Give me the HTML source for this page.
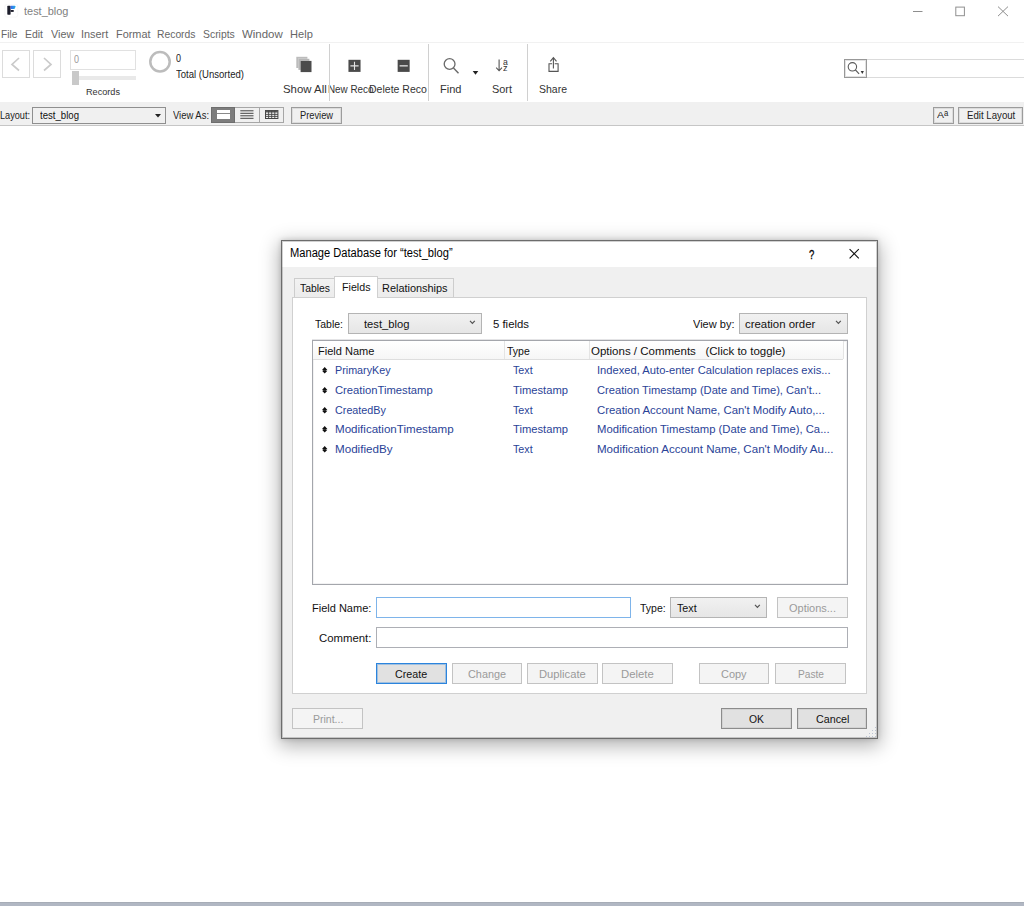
<!DOCTYPE html>
<html><head><meta charset="utf-8"><title>test_blog</title>
<style>
html,body{margin:0;padding:0;}
body{width:1024px;height:906px;position:relative;overflow:hidden;background:#fff;font-family:"Liberation Sans",sans-serif;}
div,span,svg{position:absolute;box-sizing:border-box;}
.t{white-space:pre;transform-origin:0 0;display:block;}
</style></head><body>
<span class="t" style="left:24.00px;top:6px;font-size:11.2px;line-height:11.2px;color:#808080;transform:scaleX(0.9790);">test_blog</span>
<svg style="left:4px;top:4px" width="15" height="14" viewBox="0 0 15 14"><defs><linearGradient id="ig" x1="0" x2="1"><stop offset="0" stop-color="#3b63ee"/><stop offset="1" stop-color="#22b4e4"/></linearGradient></defs><rect x="0.8" y="0.3" width="13" height="12.8" rx="2.2" fill="#fff" stroke="#f3f3f3" stroke-width="0.6"/><rect x="3.3" y="1.8" width="3.3" height="8.9" rx="0.6" fill="#1c1d2b"/><path d="M6.6 1.8h4.2a0.9 0.9 0 0 1 0.7 1.3l-0.9 1.6a0.8 0.8 0 0 1-0.7 0.4H6.6z" fill="url(#ig)"/><rect x="6.6" y="6" width="3.1" height="1.9" fill="#1c1d2b"/></svg>
<svg style="left:905px;top:0" width="119" height="24" viewBox="0 0 119 24"><path d="M8 11.5h9.5" stroke="#8e8e8e" stroke-width="1" fill="none"/><rect x="50.8" y="7.1" width="8.6" height="8.6" stroke="#909090" stroke-width="1" fill="none"/><path d="M93 6.6l10 9.5M103 6.6l-10 9.5" stroke="#8e8e8e" stroke-width="1" fill="none"/></svg>
<span class="t" style="left:1.00px;top:29px;font-size:10.6px;line-height:10.6px;color:#666;transform:scaleX(0.9543);">File</span>
<span class="t" style="left:25.20px;top:29px;font-size:10.6px;line-height:10.6px;color:#666;transform:scaleX(0.9855);">Edit</span>
<span class="t" style="left:50.50px;top:29px;font-size:10.6px;line-height:10.6px;color:#666;transform:scaleX(1.0183);">View</span>
<span class="t" style="left:81.00px;top:29px;font-size:10.6px;line-height:10.6px;color:#666;transform:scaleX(1.0260);">Insert</span>
<span class="t" style="left:115.50px;top:29px;font-size:10.6px;line-height:10.6px;color:#666;transform:scaleX(1.0277);">Format</span>
<span class="t" style="left:157.40px;top:29px;font-size:10.6px;line-height:10.6px;color:#666;transform:scaleX(0.9754);">Records</span>
<span class="t" style="left:203.20px;top:29px;font-size:10.6px;line-height:10.6px;color:#666;transform:scaleX(0.9816);">Scripts</span>
<span class="t" style="left:242.40px;top:29px;font-size:10.6px;line-height:10.6px;color:#666;transform:scaleX(1.0822);">Window</span>
<span class="t" style="left:290.20px;top:29px;font-size:10.6px;line-height:10.6px;color:#666;transform:scaleX(1.0459);">Help</span>
<div style="left:0px;top:42px;width:1024px;height:1px;background:#f1f1f1;"></div>
<div style="left:2px;top:50px;width:28px;height:28px;background:#fff;border:1px solid #dcdcdc;"></div>
<div style="left:33px;top:50px;width:28px;height:28px;background:#fff;border:1px solid #dcdcdc;"></div>
<svg style="left:2px;top:50px" width="59" height="28" viewBox="0 0 59 28"><path d="M17 8l-7 6.5 7 6" stroke="#cacaca" stroke-width="1.7" fill="none"/><path d="M42 8l7 6.5-7 6" stroke="#cacaca" stroke-width="1.7" fill="none"/></svg>
<div style="left:70px;top:50px;width:66px;height:20px;background:#fff;border:1px solid #e1e1e1;"></div>
<span class="t" style="left:74.00px;top:55px;font-size:10px;line-height:10px;color:#9a9a9a;transform:scaleX(0.8990);">0</span>
<div style="left:79px;top:76px;width:57px;height:4px;background:#e9e9e9;"></div>
<div style="left:72px;top:71px;width:7px;height:14px;background:#c9c9c9;"></div>
<span class="t" style="left:86.00px;top:87px;font-size:9.6px;line-height:9.6px;color:#333;transform:scaleX(0.9511);">Records</span>
<svg style="left:147px;top:49px" width="26" height="26" viewBox="0 0 26 26"><circle cx="13" cy="12.8" r="9.7" stroke="#bcbcbc" stroke-width="2.5" fill="none"/></svg>
<span class="t" style="left:176.00px;top:54px;font-size:10px;line-height:10px;color:#222;transform:scaleX(0.8990);">0</span>
<span class="t" style="left:176.00px;top:70px;font-size:10px;line-height:10px;color:#222;transform:scaleX(0.9559);">Total (Unsorted)</span>
<span class="t" style="left:282.50px;top:84px;font-size:11.2px;line-height:11.2px;color:#333;transform:scaleX(1.0196);">Show All</span>
<span class="t" style="left:327.50px;top:84px;font-size:11.2px;line-height:11.2px;color:#333;transform:scaleX(0.8804);">New Reco</span>
<span class="t" style="left:369.30px;top:84px;font-size:11.2px;line-height:11.2px;color:#333;transform:scaleX(0.9402);">Delete Reco</span>
<span class="t" style="left:440.00px;top:84px;font-size:11.2px;line-height:11.2px;color:#333;transform:scaleX(0.9868);">Find</span>
<span class="t" style="left:492.00px;top:84px;font-size:11.2px;line-height:11.2px;color:#333;transform:scaleX(0.9737);">Sort</span>
<span class="t" style="left:539.00px;top:84px;font-size:11.2px;line-height:11.2px;color:#333;transform:scaleX(0.9369);">Share</span>
<div style="left:329px;top:44px;width:1px;height:57px;background:#d0d0d0;"></div>
<div style="left:428px;top:44px;width:1px;height:57px;background:#d0d0d0;"></div>
<div style="left:527px;top:44px;width:1px;height:57px;background:#d0d0d0;"></div>
<svg style="left:295px;top:56px" width="18" height="17" viewBox="0 0 18 17"><rect x="1.3" y="0.8" width="11.1" height="11.2" fill="#bcbcbc"/><rect x="3.1" y="2.5" width="11.5" height="11.6" fill="#fff" opacity="0.55"/><rect x="3.4" y="2.8" width="11" height="11.1" fill="#b6b6b6"/><rect x="5.3" y="4.6" width="11.4" height="11.7" fill="#fff" opacity="0.5"/><rect x="5.6" y="4.9" width="10.9" height="11.2" fill="#4c4c4c"/></svg>
<svg style="left:348px;top:59px" width="14" height="14" viewBox="0 0 14 14"><rect x="0.45" y="0.8" width="12.1" height="12.1" fill="#4a4a4a"/><path d="M6.5 2.8v8.1M2.4 6.85h8.2" stroke="#e4e4e4" stroke-width="1.1"/></svg>
<svg style="left:397px;top:59px" width="14" height="14" viewBox="0 0 14 14"><rect x="0.65" y="0.8" width="12" height="12.1" fill="#4a4a4a"/><path d="M2.6 6.85h8.2" stroke="#e4e4e4" stroke-width="1.3"/></svg>
<svg style="left:442px;top:57px" width="40" height="20" viewBox="0 0 40 20"><circle cx="7.6" cy="7" r="5.4" stroke="#6a6a6a" stroke-width="1.3" fill="none"/><path d="M11.5 10.9l5 5.4" stroke="#6a6a6a" stroke-width="1.4"/><path d="M30.7 13.9h5.6l-2.8 3.8z" fill="#222"/></svg>
<svg style="left:494px;top:58px" width="16" height="16" viewBox="0 0 16 16"><path d="M5.1 1.6v11M2.2 9.6l2.9 3.2 2.9-3.2" stroke="#555" stroke-width="1.1" fill="none"/></svg>
<span class="t" style="left:503.00px;top:57px;font-size:9.6px;line-height:9.6px;color:#333;transform:scaleX(0.8990);">a</span>
<span class="t" style="left:503.30px;top:63px;font-size:9.6px;line-height:9.6px;color:#333;transform:scaleX(0.9375);">z</span>
<svg style="left:546px;top:56px" width="16" height="18" viewBox="0 0 16 18"><path d="M6.1 7.8H3v7.6h9.1V7.8H8.7" stroke="#555" stroke-width="1.1" fill="none"/><path d="M7.4 2v10.4M4.3 5.4L7.4 1.7l3.1 3.7" stroke="#555" stroke-width="1.1" fill="none"/></svg>
<div style="left:866px;top:59px;width:159px;height:19px;background:#fff;border:1px solid #dbdbdb;"></div>
<div style="left:844px;top:59px;width:23px;height:19px;background:#fff;border:1px solid #989898;box-shadow:inset 0 0 0 1px #e2e2e2;"></div>
<svg style="left:846px;top:60px" width="20" height="17" viewBox="0 0 20 17"><circle cx="6.4" cy="6.8" r="4.2" stroke="#5a5a5a" stroke-width="1.1" fill="none"/><path d="M9.4 9.9l3.7 4" stroke="#5a5a5a" stroke-width="1.2"/><path d="M14.7 11.1h3.2l-1.6 2.8z" fill="#333"/></svg>
<div style="left:0px;top:102px;width:1024px;height:23px;background:#f0f0f0;"></div>
<div style="left:0px;top:125px;width:1024px;height:1px;background:#c6c6c6;"></div>
<span class="t" style="left:0.00px;top:111px;font-size:10px;line-height:10px;color:#222;transform:scaleX(0.9146);">Layout:</span>
<div style="left:32px;top:106.5px;width:134px;height:17px;background:#f0f0f0;border:1.5px solid #8f8f8f;"></div>
<span class="t" style="left:40.00px;top:111px;font-size:10px;line-height:10px;color:#111;transform:scaleX(0.9609);">test_blog</span>
<svg style="left:154px;top:113px" width="8" height="6" viewBox="0 0 8 6"><path d="M1 1h6l-3 3.6z" fill="#222"/></svg>
<span class="t" style="left:173.00px;top:111px;font-size:10px;line-height:10px;color:#222;transform:scaleX(0.9432);">View As:</span>
<div style="left:211px;top:107px;width:24px;height:16px;background:#7d7d7d;border:1px solid #6e6e6e;"></div>
<div style="left:217px;top:110px;width:13px;height:9px;background:#fff;border-top:1px solid #fff;"></div>
<div style="left:217px;top:113px;width:13px;height:1px;background:#8a8a8a;"></div>
<div style="left:235px;top:107px;width:24.5px;height:16px;background:#f0f0f0;border:1px solid #a6a6a6;border-left:none;"></div>
<svg style="left:240px;top:110px" width="14" height="10" viewBox="0 0 14 10"><path d="M0.3 0.8h13.2M0.3 3.3h13.2M0.3 5.8h13.2M0.3 8.3h13.2" stroke="#444" stroke-width="1"/></svg>
<div style="left:259.5px;top:107px;width:24.5px;height:16px;background:#f0f0f0;border:1px solid #a6a6a6;border-left:none;"></div>
<svg style="left:265px;top:110px" width="14" height="10" viewBox="0 0 14 10"><rect x="0.5" y="0.5" width="12.4" height="8" fill="none" stroke="#444"/><rect x="0.5" y="0.5" width="12.4" height="2" fill="#555"/><path d="M0 4.4h13M0 6.4h13M3.6 0.5v8M6.7 0.5v8M9.8 0.5v8" stroke="#444" stroke-width="0.9"/></svg>
<div style="left:291px;top:106.5px;width:51px;height:17px;background:#f0f0f0;border:1px solid #9c9c9c;box-shadow:inset 0 0 0 1px #dcdcdc;"></div>
<span class="t" style="left:300.00px;top:111px;font-size:10px;line-height:10px;color:#222;transform:scaleX(0.9278);">Preview</span>
<div style="left:932.5px;top:106.5px;width:21px;height:17px;background:#f0f0f0;border:1px solid #9c9c9c;box-shadow:inset 0 0 0 1px #dcdcdc;"></div>
<span class="t" style="left:937.00px;top:110px;font-size:9.8px;line-height:9.8px;color:#222;transform:scaleX(1.0709);">A</span>
<span class="t" style="left:944.30px;top:108px;font-size:9.4px;line-height:9.4px;color:#222;transform:scaleX(0.8225);">a</span>
<div style="left:958px;top:106.5px;width:65px;height:17px;background:#f0f0f0;border:1px solid #9c9c9c;box-shadow:inset 0 0 0 1px #dcdcdc;"></div>
<span class="t" style="left:966.50px;top:111px;font-size:10px;line-height:10px;color:#222;transform:scaleX(0.9653);">Edit Layout</span>
<div style="left:0px;top:902px;width:1024px;height:4px;background:#b1b7c3;border-top:1px solid #a7adb7;"></div>
<div style="left:281px;top:240px;width:597px;height:499px;background:#f0f0f0;border:1px solid #6c6c6c;box-shadow:0 5px 18px 2px rgba(0,0,0,0.30),0 0 5px rgba(0,0,0,0.16);"></div>
<div style="left:282px;top:241px;width:595px;height:26px;background:#fff;"></div>
<div style="left:282px;top:241px;width:595px;height:497px;border:1px solid rgba(0,0,0,0.18);"></div>
<span class="t" style="left:290.00px;top:247px;font-size:12px;line-height:12px;color:#000;transform:scaleX(0.9268);">Manage Database for “test_blog”</span>
<span class="t" style="left:809.00px;top:248px;font-size:13.6px;line-height:13.6px;color:#000;transform:scaleX(0.7007);-webkit-text-stroke:0.3px #000;">?</span>
<svg style="left:849px;top:248px" width="12" height="12" viewBox="0 0 12 12"><path d="M0.6 1.1l9.2 9.2M9.8 1.1L0.6 10.3" stroke="#111" stroke-width="1.1"/></svg>
<div style="left:292px;top:297px;width:575px;height:397px;background:#fff;border:1px solid #d0d0d0;"></div>
<div style="left:294px;top:278px;width:41px;height:20px;background:linear-gradient(#f2f2f2,#ececec);border:1px solid #cdcdcd;border-bottom:none;height:19px;"></div>
<div style="left:377px;top:278px;width:77px;height:20px;background:linear-gradient(#f2f2f2,#ececec);border:1px solid #cdcdcd;border-bottom:none;height:19px;"></div>
<div style="left:334px;top:276px;width:44px;height:22px;background:#fff;border:1px solid #d0d0d0;border-bottom:none;"></div>
<span class="t" style="left:300.00px;top:283px;font-size:11.4px;line-height:11.4px;color:#111;transform:scaleX(0.9104);">Tables</span>
<span class="t" style="left:342.00px;top:282px;font-size:11.4px;line-height:11.4px;color:#111;transform:scaleX(0.9372);">Fields</span>
<span class="t" style="left:382.00px;top:283px;font-size:11.4px;line-height:11.4px;color:#111;transform:scaleX(0.9585);">Relationships</span>
<span class="t" style="left:315.00px;top:319px;font-size:11.4px;line-height:11.4px;color:#111;transform:scaleX(0.9204);">Table:</span>
<div style="left:348px;top:313px;width:133.5px;height:21px;background:linear-gradient(#f1f1f1,#e6e6e6);border:1px solid #b4b4b4;"></div>
<svg style="left:468.5px;top:320.3px" width="7" height="5" viewBox="0 0 7 5"><path d="M1 0.8l2.4 2.6 2.4-2.6" stroke="#555" stroke-width="1.2" fill="none"/></svg>
<span class="t" style="left:363.50px;top:319px;font-size:11.4px;line-height:11.4px;color:#111;transform:scaleX(0.9834);">test_blog</span>
<span class="t" style="left:493.00px;top:319px;font-size:11.4px;line-height:11.4px;color:#111;transform:scaleX(0.9967);">5 fields</span>
<span class="t" style="left:693.00px;top:319px;font-size:11.4px;line-height:11.4px;color:#111;transform:scaleX(0.9679);">View by:</span>
<div style="left:739px;top:313px;width:108.5px;height:21px;background:linear-gradient(#f1f1f1,#e6e6e6);border:1px solid #b4b4b4;"></div>
<svg style="left:834.5px;top:320.3px" width="7" height="5" viewBox="0 0 7 5"><path d="M1 0.8l2.4 2.6 2.4-2.6" stroke="#555" stroke-width="1.2" fill="none"/></svg>
<span class="t" style="left:745.40px;top:319px;font-size:11.4px;line-height:11.4px;color:#111;transform:scaleX(1.0002);">creation order</span>
<div style="left:312px;top:340px;width:536px;height:245px;background:#fff;border:1px solid #a4a6ac;box-shadow:inset 0 0 0 1px rgba(0,0,20,0.05);"></div>
<div style="left:312px;top:339px;width:536px;height:1px;background:rgba(164,166,172,0.3);"></div>
<div style="left:313px;top:341px;width:530px;height:19px;background:linear-gradient(#fff,#f6f6f6);border-bottom:1px solid #dedede;"></div>
<div style="left:504px;top:341px;width:1px;height:18px;background:#e4e4e4;"></div>
<div style="left:589px;top:341px;width:1px;height:18px;background:#e4e4e4;"></div>
<div style="left:843px;top:341px;width:1px;height:18px;background:#e4e4e4;"></div>
<span class="t" style="left:318.00px;top:346px;font-size:11.2px;line-height:11.2px;color:#111;transform:scaleX(0.9867);">Field Name</span>
<span class="t" style="left:507.00px;top:346px;font-size:11.2px;line-height:11.2px;color:#111;transform:scaleX(0.9390);">Type</span>
<span class="t" style="left:591.40px;top:346px;font-size:11.2px;line-height:11.2px;color:#111;transform:scaleX(1.0284);">Options / Comments   (Click to toggle)</span>
<span class="t" style="left:335.00px;top:365px;font-size:11.2px;line-height:11.2px;color:#2a4397;transform:scaleX(0.9607);">PrimaryKey</span>
<span class="t" style="left:512.50px;top:365px;font-size:11.2px;line-height:11.2px;color:#2a4397;transform:scaleX(0.9591);">Text</span>
<span class="t" style="left:597.20px;top:365px;font-size:11.2px;line-height:11.2px;color:#2a4397;transform:scaleX(0.9988);">Indexed, Auto-enter Calculation replaces exis...</span>
<svg style="left:322px;top:366.80px" width="6" height="7" viewBox="0 0 6 7"><path d="M2.7 0.1L5.4 2.9H0zM2.7 6.5L5.4 3.7H0z" fill="#111"/><rect x="1.1" y="2.8" width="3.2" height="1" fill="#111"/></svg>
<span class="t" style="left:335.00px;top:385px;font-size:11.2px;line-height:11.2px;color:#2a4397;transform:scaleX(1.0051);">CreationTimestamp</span>
<span class="t" style="left:512.50px;top:385px;font-size:11.2px;line-height:11.2px;color:#2a4397;transform:scaleX(1.0005);">Timestamp</span>
<span class="t" style="left:597.20px;top:385px;font-size:11.2px;line-height:11.2px;color:#2a4397;transform:scaleX(0.9970);">Creation Timestamp (Date and Time), Can't...</span>
<svg style="left:322px;top:386.80px" width="6" height="7" viewBox="0 0 6 7"><path d="M2.7 0.1L5.4 2.9H0zM2.7 6.5L5.4 3.7H0z" fill="#111"/><rect x="1.1" y="2.8" width="3.2" height="1" fill="#111"/></svg>
<span class="t" style="left:335.00px;top:405px;font-size:11.2px;line-height:11.2px;color:#2a4397;transform:scaleX(0.9638);">CreatedBy</span>
<span class="t" style="left:512.50px;top:405px;font-size:11.2px;line-height:11.2px;color:#2a4397;transform:scaleX(0.9591);">Text</span>
<span class="t" style="left:597.20px;top:405px;font-size:11.2px;line-height:11.2px;color:#2a4397;transform:scaleX(1.0166);">Creation Account Name, Can't Modify Auto,...</span>
<svg style="left:322px;top:406.80px" width="6" height="7" viewBox="0 0 6 7"><path d="M2.7 0.1L5.4 2.9H0zM2.7 6.5L5.4 3.7H0z" fill="#111"/><rect x="1.1" y="2.8" width="3.2" height="1" fill="#111"/></svg>
<span class="t" style="left:335.00px;top:424px;font-size:11.2px;line-height:11.2px;color:#2a4397;transform:scaleX(1.0350);">ModificationTimestamp</span>
<span class="t" style="left:512.50px;top:424px;font-size:11.2px;line-height:11.2px;color:#2a4397;transform:scaleX(1.0005);">Timestamp</span>
<span class="t" style="left:597.20px;top:424px;font-size:11.2px;line-height:11.2px;color:#2a4397;transform:scaleX(1.0081);">Modification Timestamp (Date and Time), Ca...</span>
<svg style="left:322px;top:425.80px" width="6" height="7" viewBox="0 0 6 7"><path d="M2.7 0.1L5.4 2.9H0zM2.7 6.5L5.4 3.7H0z" fill="#111"/><rect x="1.1" y="2.8" width="3.2" height="1" fill="#111"/></svg>
<span class="t" style="left:335.00px;top:444px;font-size:11.2px;line-height:11.2px;color:#2a4397;transform:scaleX(1.0378);">ModifiedBy</span>
<span class="t" style="left:512.50px;top:444px;font-size:11.2px;line-height:11.2px;color:#2a4397;transform:scaleX(0.9591);">Text</span>
<span class="t" style="left:597.20px;top:444px;font-size:11.2px;line-height:11.2px;color:#2a4397;transform:scaleX(1.0324);">Modification Account Name, Can't Modify Au...</span>
<svg style="left:322px;top:445.80px" width="6" height="7" viewBox="0 0 6 7"><path d="M2.7 0.1L5.4 2.9H0zM2.7 6.5L5.4 3.7H0z" fill="#111"/><rect x="1.1" y="2.8" width="3.2" height="1" fill="#111"/></svg>
<span class="t" style="left:312.00px;top:603px;font-size:11.4px;line-height:11.4px;color:#111;transform:scaleX(0.9666);">Field Name:</span>
<div style="left:376px;top:597px;width:255px;height:21px;background:#fff;border:1px solid #7eb4ea;"></div>
<span class="t" style="left:640.00px;top:603px;font-size:11.4px;line-height:11.4px;color:#111;transform:scaleX(0.9235);">Type:</span>
<div style="left:670px;top:597px;width:96.5px;height:21px;background:linear-gradient(#f1f1f1,#e6e6e6);border:1px solid #b4b4b4;"></div>
<svg style="left:753.5px;top:604.3px" width="7" height="5" viewBox="0 0 7 5"><path d="M1 0.8l2.4 2.6 2.4-2.6" stroke="#555" stroke-width="1.2" fill="none"/></svg>
<span class="t" style="left:676.70px;top:603px;font-size:11.4px;line-height:11.4px;color:#111;transform:scaleX(0.9422);">Text</span>
<div style="left:776.7px;top:597px;width:71px;height:21px;background:#f4f4f4;border:1px solid #c3c3c3;"></div>
<span class="t" style="left:789.00px;top:603px;font-size:11.4px;line-height:11.4px;color:#9a9a9a;transform:scaleX(0.9633);">Options...</span>
<span class="t" style="left:319.00px;top:633px;font-size:11.4px;line-height:11.4px;color:#111;transform:scaleX(0.9966);">Comment:</span>
<div style="left:376px;top:627px;width:472px;height:21px;background:#fff;border:1px solid #adafb5;"></div>
<div style="left:376px;top:663px;width:71px;height:21px;background:#e1e1e1;border:1px solid #2b84dd;box-shadow:inset 0 0 0 1px rgba(43,132,221,0.35);"></div>
<span class="t" style="left:395.40px;top:669px;font-size:11.4px;line-height:11.4px;color:#111;transform:scaleX(0.9411);">Create</span>
<div style="left:451.7px;top:663px;width:70.5px;height:21px;background:#f4f4f4;border:1px solid #c3c3c3;"></div>
<span class="t" style="left:467.60px;top:669px;font-size:11.4px;line-height:11.4px;color:#9a9a9a;transform:scaleX(0.9553);">Change</span>
<div style="left:526.7px;top:663px;width:71px;height:21px;background:#f4f4f4;border:1px solid #c3c3c3;"></div>
<span class="t" style="left:539.20px;top:669px;font-size:11.4px;line-height:11.4px;color:#9a9a9a;transform:scaleX(0.9847);">Duplicate</span>
<div style="left:602.3px;top:663px;width:70.7px;height:21px;background:#f4f4f4;border:1px solid #c3c3c3;"></div>
<span class="t" style="left:621.40px;top:669px;font-size:11.4px;line-height:11.4px;color:#9a9a9a;transform:scaleX(0.9954);">Delete</span>
<div style="left:698.5px;top:663px;width:70.5px;height:21px;background:#f4f4f4;border:1px solid #c3c3c3;"></div>
<span class="t" style="left:721.40px;top:669px;font-size:11.4px;line-height:11.4px;color:#9a9a9a;transform:scaleX(0.9619);">Copy</span>
<div style="left:775px;top:663px;width:71px;height:21px;background:#f4f4f4;border:1px solid #c3c3c3;"></div>
<span class="t" style="left:797.60px;top:669px;font-size:11.4px;line-height:11.4px;color:#9a9a9a;transform:scaleX(0.8919);">Paste</span>
<div style="left:292.3px;top:708px;width:70.5px;height:21px;background:#f4f4f4;border:1px solid #c3c3c3;"></div>
<span class="t" style="left:312.60px;top:714px;font-size:11.4px;line-height:11.4px;color:#9a9a9a;transform:scaleX(0.9228);">Print...</span>
<div style="left:721px;top:708px;width:70.6px;height:21px;background:#e1e1e1;border:1px solid #8c8c8c;box-shadow:inset 0 0 0 1px rgba(0,0,0,0.06);"></div>
<span class="t" style="left:749.20px;top:714px;font-size:11.4px;line-height:11.4px;color:#111;transform:scaleX(0.9107);">OK</span>
<div style="left:797px;top:708px;width:70px;height:21px;background:#e1e1e1;border:1px solid #8c8c8c;box-shadow:inset 0 0 0 1px rgba(0,0,0,0.06);"></div>
<span class="t" style="left:815.75px;top:714px;font-size:11.4px;line-height:11.4px;color:#111;transform:scaleX(0.9426);">Cancel</span>
<div style="left:875px;top:727px;width:1.4px;height:1.4px;background:#bcc4d2;"></div>
<div style="left:872px;top:730px;width:1.4px;height:1.4px;background:#bcc4d2;"></div>
<div style="left:875px;top:730px;width:1.4px;height:1.4px;background:#bcc4d2;"></div>
<div style="left:869px;top:733px;width:1.4px;height:1.4px;background:#bcc4d2;"></div>
<div style="left:872px;top:733px;width:1.4px;height:1.4px;background:#bcc4d2;"></div>
<div style="left:875px;top:733px;width:1.4px;height:1.4px;background:#bcc4d2;"></div>
<div style="left:866px;top:736px;width:1.4px;height:1.4px;background:#bcc4d2;"></div>
<div style="left:869px;top:736px;width:1.4px;height:1.4px;background:#bcc4d2;"></div>
<div style="left:872px;top:736px;width:1.4px;height:1.4px;background:#bcc4d2;"></div>
<div style="left:875px;top:736px;width:1.4px;height:1.4px;background:#bcc4d2;"></div>
</body></html>
